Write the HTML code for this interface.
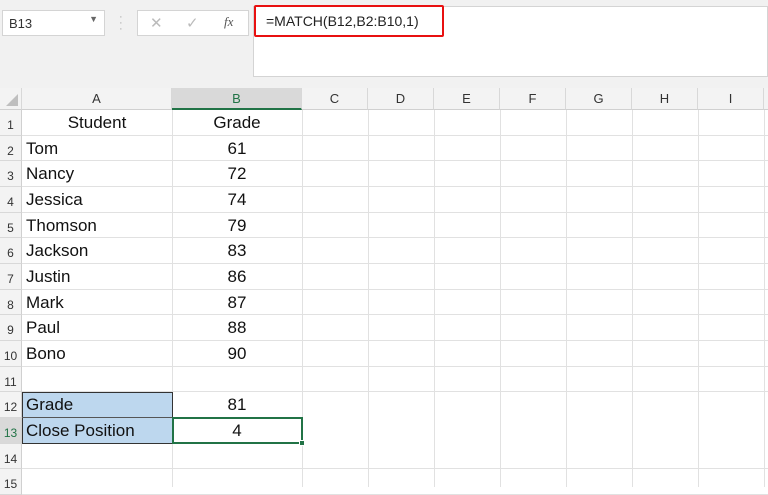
<!DOCTYPE html>
<html><head><style>
*{margin:0;padding:0;box-sizing:border-box}
body{width:768px;height:487px;overflow:hidden;background:#fff;font-family:"Liberation Sans",Calibri,sans-serif;position:relative}
.top{position:absolute;left:0;top:0;width:768px;height:88px;background:#f1f1f1}
.nb{position:absolute;left:2px;top:10px;width:103px;height:26px;background:#fff;border:1px solid #d4d4d4;font-size:13px;color:#333;padding:5px 6px}
.fx{position:absolute;left:137px;top:10px;width:112px;height:26px;background:#fff;border:1px solid #d4d4d4}
.fb{position:absolute;left:253px;top:6px;width:515px;height:71px;background:#fff;border:1px solid #d4d4d4}
.red{position:absolute;left:254px;top:5px;width:190px;height:32px;border:2px solid #e81010;border-radius:2px;font-size:14px;color:#222;padding:6px 10px}
.ch{position:absolute;top:88px;height:22px;background:#f3f3f3;border-right:1px solid #d8d8d8;border-bottom:1px solid #d0d0d0;font-size:13px;color:#333;text-align:center;line-height:21px}
.rh{position:absolute;left:0;width:22px;background:#f3f3f3;border-bottom:1px solid #d8d8d8;border-right:1px solid #d0d0d0;font-size:12px;color:#333;text-align:center;line-height:30px;overflow:hidden}
.vl{position:absolute;top:110px;bottom:0;width:1px;background:#e1e1e1}
.hl{position:absolute;left:22px;right:0;height:1px;background:#e1e1e1}
.c{position:absolute;font-size:17px;color:#111;line-height:25px;white-space:nowrap;z-index:5}
</style></head><body>
<div class="top"></div>
<div class="nb">B13<span style="position:absolute;right:6px;top:3px;font-size:9px;color:#666">▼</span></div>
<div style="position:absolute;left:119px;top:14px;color:#aaa;font-size:11px;line-height:6px">·<br>·<br>·</div>
<div class="fx"><span style="position:absolute;left:12px;top:3px;color:#bbb;font-size:15px">✕</span><span style="position:absolute;left:48px;top:3px;color:#bbb;font-size:15px">✓</span><span style="position:absolute;left:86px;top:3px;color:#555;font-size:13px;font-style:italic;font-family:'Liberation Serif',serif">fx</span></div>
<div class="fb"></div>
<div class="red">=MATCH(B12,B2:B10,1)</div>
<div class="ch" style="left:0;width:22px"><svg width="22" height="22" style="position:absolute;left:0;top:0"><path d="M18 6 L18 18 L6 18Z" fill="#bfbfbf"/></svg></div>
<div class="ch" style="left:22px;width:150px">A</div>
<div class="ch" style="left:172px;width:130px;background:#d9d9d9;color:#217346;border-bottom:2px solid #217346">B</div>
<div class="ch" style="left:302px;width:66px">C</div>
<div class="ch" style="left:368px;width:66px">D</div>
<div class="ch" style="left:434px;width:66px">E</div>
<div class="ch" style="left:500px;width:66px">F</div>
<div class="ch" style="left:566px;width:66px">G</div>
<div class="ch" style="left:632px;width:66px">H</div>
<div class="ch" style="left:698px;width:66px">I</div>
<div class="ch" style="left:764px;width:10px"></div>
<div class="vl" style="left:172px"></div><div class="vl" style="left:302px"></div><div class="vl" style="left:368px"></div><div class="vl" style="left:434px"></div><div class="vl" style="left:500px"></div><div class="vl" style="left:566px"></div><div class="vl" style="left:632px"></div><div class="vl" style="left:698px"></div><div class="vl" style="left:764px"></div>
<div style="position:absolute;left:22px;top:392px;width:151px;height:52px;background:#bdd7ee;border:1px solid #333"></div>
<div style="position:absolute;left:22px;top:417px;width:150px;height:1px;background:#555"></div>
<div style="position:absolute;left:172px;top:417px;width:131px;height:27px;border:2px solid #217346"></div>
<div style="position:absolute;left:299px;top:440px;width:6px;height:6px;background:#217346;border:1px solid #fff"></div>
<div id="rows"></div>
<script>
var names=["Student","Tom","Nancy","Jessica","Thomson","Jackson","Justin","Mark","Paul","Bono","","Grade","Close Position","",""];
var vals=["Grade","61","72","74","79","83","86","87","88","90","","81","4","",""];
var h="";var rh=25.67;
for(var i=0;i<15;i++){var t=110+i*rh;
h+='<div class="rh" style="top:'+t+'px;height:'+rh+'px;'+(i==12?'background:#d9d9d9;color:#217346':'')+'">'+(i+1)+'</div>';
if(i!=11&&i!=12)h+='<div class="hl" style="top:'+(t+rh-1)+'px"></div>';
if(names[i])h+='<div class="c" style="top:'+t+'px;'+(i==0?'left:22px;width:150px;text-align:center':'left:26px')+'">'+names[i]+'</div>';
if(vals[i])h+='<div class="c" style="top:'+t+'px;left:172px;width:130px;text-align:center">'+vals[i]+'</div>';}
document.getElementById("rows").innerHTML=h;
</script>
</body></html>
